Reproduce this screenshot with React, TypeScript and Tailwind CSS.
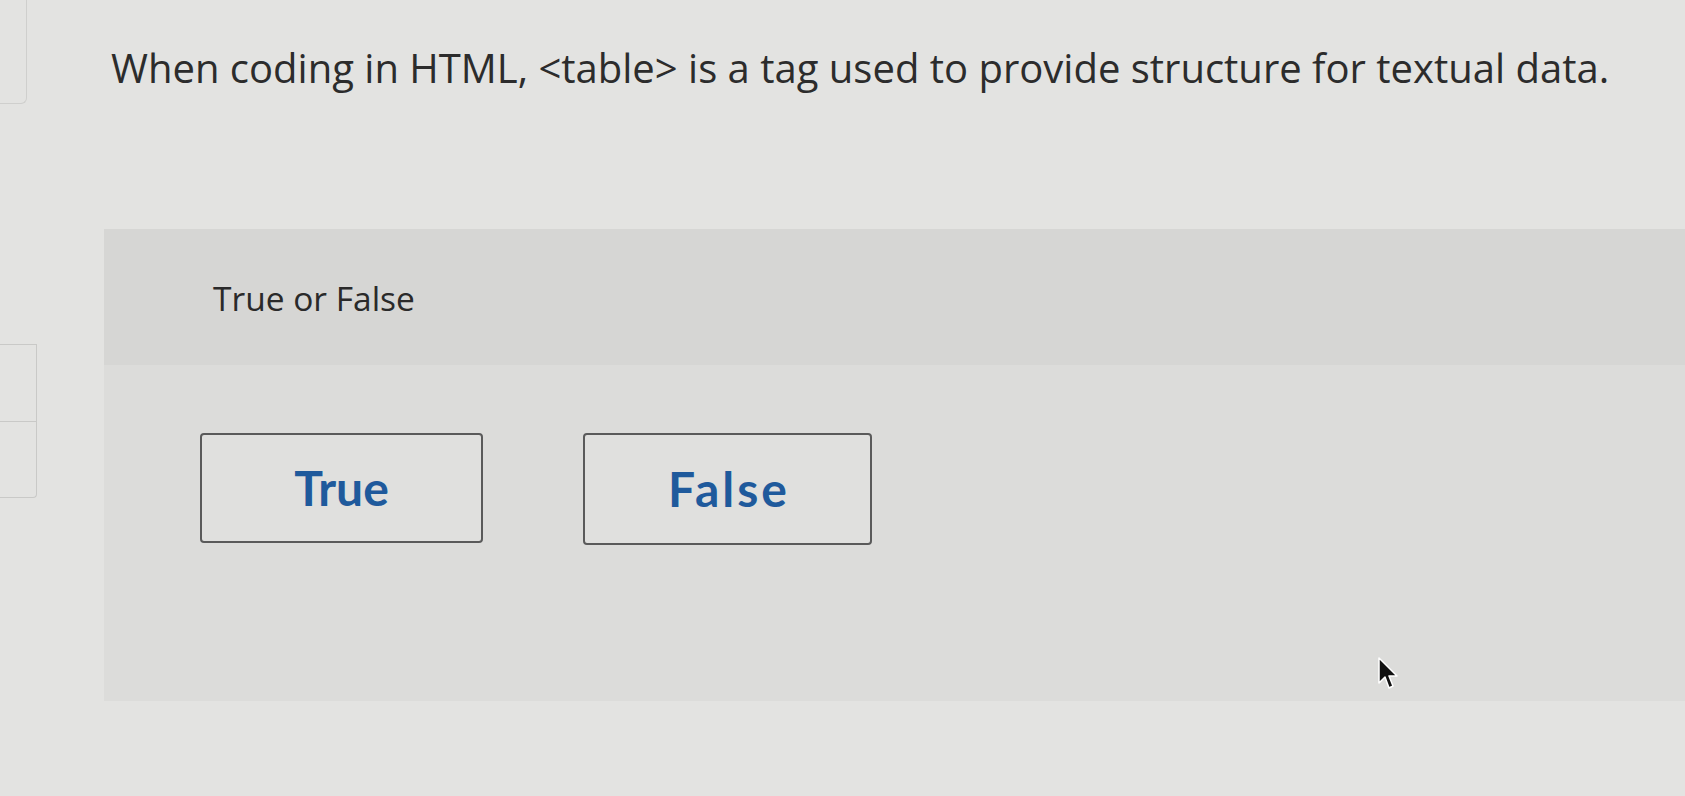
export default function App() {
  return (
    <div
      className="relative min-h-screen w-full overflow-hidden bg-[#e3e3e1] flex"
      style={{ fontFamily: '"Open Sans", Lato, sans-serif' }}
    >
      {/* left rail, cut off by the screen edge */}
      <div className="w-[37px] shrink-0 flex flex-col">
        <div className="w-[27px] h-[104px] border-r border-b border-[#cfcfcd] rounded-br-md" />
        <div className="mt-[240px] h-[78px] border-r border-t border-b border-[#c9c9c7]" />
        <div className="h-[76px] border-r border-b border-[#c9c9c7] rounded-br-sm" />
      </div>

      <div className="flex-1 flex flex-col">
        <h1 className="pl-[74px] pt-[40px] text-[40px] leading-[56px] text-[#2c2c2c] font-normal">
          When coding in HTML, &lt;table&gt; is a tag used to provide structure for textual data.
        </h1>

        <div className="ml-[67px] mt-[133px] h-[472px] flex flex-col bg-[#dcdcda]">
          <div className="h-[136px] bg-[#d6d6d4] pl-[109px] pt-[49px]">
            <p className="text-[33.5px] leading-[40px] text-[#2a2a2a]">True or False</p>
          </div>

          <div className="flex gap-[100px] pl-[96px] pt-[68px]">
            <button
              className="w-[283px] h-[110px] rounded-[4px] border-2 border-[#5a5a5a] bg-[#e0e0de] text-[48px] font-bold text-[#1f5a9c]"
              style={{ fontFamily: 'Lato, sans-serif' }}
            >
              True
            </button>
            <button
              className="w-[289px] h-[112px] pl-[3px] rounded-[4px] border-2 border-[#5a5a5a] bg-[#e0e0de] text-[48px] font-bold tracking-[3px] text-[#1f5a9c]"
              style={{ fontFamily: 'Lato, sans-serif' }}
            >
              False
            </button>
          </div>
        </div>
      </div>

      {/* mouse pointer */}
      <svg
        className="absolute left-[1377px] top-[657px]"
        width="22"
        height="34"
        viewBox="0 0 22 34"
      >
        <path
          d="M2 1 L2 26 L8 20 L12 31 L16 29 L12 19 L20 19 Z"
          fill="#111"
          stroke="#fff"
          strokeWidth="1.5"
          strokeLinejoin="round"
        />
      </svg>
    </div>
  );
}
